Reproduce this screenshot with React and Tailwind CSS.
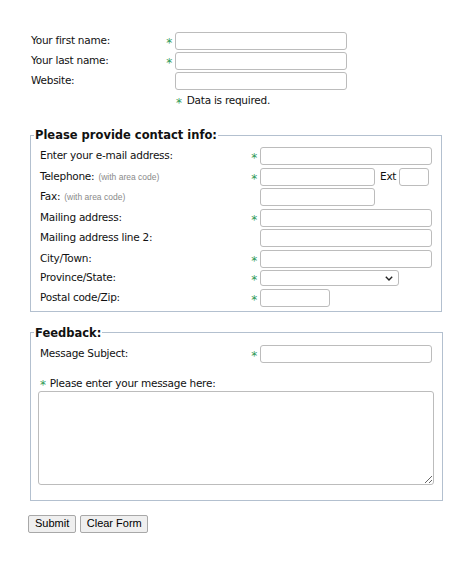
import React, { useState } from "react";

const Req = ({ className = "" }) => (
  <span className={"text-[#2f9a56] text-[12px] leading-none " + className}>*</span>
);

const inputCls =
  "h-[18px] border border-[#bcbcbc] rounded-[3px] bg-white px-1 text-[10px] outline-none";

const Row = ({ label, hint, required, children, h = "h-[18px]" }) => (
  <div className={"grid grid-cols-[208px_12px_1fr] items-center " + h}>
    <div className="whitespace-nowrap">
      {label}
      {hint && (
        <span className="ml-[4px] tracking-normal text-[8.5px] text-[#8a8a8a] font-['Liberation_Sans',sans-serif]">
          {hint}
        </span>
      )}
    </div>
    <div className="flex justify-center pt-[4px]">{required && <Req />}</div>
    <div className="flex items-center">{children}</div>
  </div>
);

const App = () => {
  const [form, setForm] = useState({
    firstName: "",
    lastName: "",
    website: "",
    email: "",
    phone: "",
    ext: "",
    fax: "",
    address: "",
    address2: "",
    city: "",
    province: "",
    postal: "",
    subject: "",
    message: "",
  });

  const onChange = (e) => {
    const { name, value } = e.target;
    setForm((f) => ({ ...f, [name]: value }));
  };

  const clear = () => {
    setForm((f) => Object.fromEntries(Object.keys(f).map((k) => [k, ""])));
  };

  return (
    <div className="bg-white min-h-[568px] font-['DejaVu_Sans',sans-serif] text-[10.5px] tracking-[-0.25px] text-[#111] pl-[28px] pt-[32px]">
      <form className="w-[416px]" onSubmit={(e) => e.preventDefault()}>
        {/* ---- name / website ---- */}
        <div className="flex flex-col gap-[2px]">
          {[
            ["Your first name:", "firstName", true],
            ["Your last name:", "lastName", true],
            ["Website:", "website", false],
          ].map(([label, name, req]) => (
            <div key={name} className="grid grid-cols-[135px_12px_172px] items-center h-[18px]">
              <div className="pl-[3px]">{label}</div>
              <div className="flex justify-center pt-[4px]">{req && <Req />}</div>
              <input name={name} value={form[name]} onChange={onChange} className={inputCls + " w-[172px]"} />
            </div>
          ))}
        </div>
        <div className="mt-[1px] pl-[148px] leading-[14px] flex items-center">
          <Req className="text-[11px] pt-[6px]" />
          <span className="ml-[5px]">Data is required.</span>
        </div>

        {/* ---- contact info ---- */}
        <fieldset className="mt-[19px] mx-[2px] border border-[#b3c0cf] pl-[3px] pr-[3px] pb-[4px]">
          <legend className="px-[1px] font-bold text-[11.5px] tracking-normal leading-[14px]">
            Please provide contact info:
          </legend>
          <div className="pl-[6px] pr-[5px] pt-[5px] flex flex-col gap-[2.5px]">
            <Row label="Enter your e-mail address:" required>
              <input name="email" value={form.email} onChange={onChange} className={inputCls + " w-[172px]"} />
            </Row>
            <Row label="Telephone:" hint="(with area code)" required>
              <input name="phone" value={form.phone} onChange={onChange} className={inputCls + " w-[115px]"} />
              <span className="ml-[5px] mr-[3px]">Ext</span>
              <input name="ext" value={form.ext} onChange={onChange} className={inputCls + " w-[30px]"} />
            </Row>
            <Row label="Fax:" hint="(with area code)">
              <input name="fax" value={form.fax} onChange={onChange} className={inputCls + " w-[115px]"} />
            </Row>
            <Row label="Mailing address:" required>
              <input name="address" value={form.address} onChange={onChange} className={inputCls + " w-[172px]"} />
            </Row>
            <Row label="Mailing address line 2:">
              <input name="address2" value={form.address2} onChange={onChange} className={inputCls + " w-[172px]"} />
            </Row>
            <Row label="City/Town:" required>
              <input name="city" value={form.city} onChange={onChange} className={inputCls + " w-[172px]"} />
            </Row>
            <Row label="Province/State:" required h="h-[16px]">
              <div className="relative w-[139px] h-[16px]">
                <select
                  name="province"
                  value={form.province}
                  onChange={onChange}
                  className="appearance-none w-full h-[16px] border border-[#bcbcbc] rounded-[3px] bg-white text-[10px] px-1 outline-none"
                >
                  <option value=""></option>
                  <option value="ON">Ontario</option>
                  <option value="QC">Quebec</option>
                  <option value="BC">British Columbia</option>
                </select>
                <svg
                  className="absolute right-[6px] top-[6px] pointer-events-none"
                  width="8"
                  height="5"
                  viewBox="0 0 8 5"
                >
                  <path d="M0.8 0.8 L4 4 L7.2 0.8" fill="none" stroke="#222" strokeWidth="1.4" />
                </svg>
              </div>
            </Row>
            <Row label="Postal code/Zip:" required>
              <input name="postal" value={form.postal} onChange={onChange} className={inputCls + " w-[70px]"} />
            </Row>
          </div>
        </fieldset>

        {/* ---- feedback ---- */}
        <fieldset className="mt-[14px] mx-[2px] border border-[#b3c0cf] pl-[3px] pr-[3px] pb-[15px]">
          <legend className="px-[1px] font-bold text-[11.5px] tracking-normal leading-[14px]">Feedback:</legend>
          <div className="pl-[6px] pr-[5px] pt-[5px]">
            <Row label="Message Subject:" required>
              <input name="subject" value={form.subject} onChange={onChange} className={inputCls + " w-[172px]"} />
            </Row>
            <div className="mt-[12px] leading-[14px] flex items-center">
              <Req className="pt-[4px]" />
              <span className="ml-[4px]">Please enter your message here:</span>
            </div>
            <textarea
              name="message"
              value={form.message}
              onChange={onChange}
              className="mt-[0px] -ml-[2px] block w-[396px] h-[94px] border border-[#bcbcbc] rounded-[3px] bg-white outline-none text-[10px] p-1"
            />
          </div>
        </fieldset>

        {/* ---- buttons ---- */}
        <div className="mt-[14px] flex gap-[4px] font-['Liberation_Sans',sans-serif] text-[11px] tracking-normal text-black">
          <button type="submit" className="h-[18px] px-[6px] border border-[#a8a8a8] rounded-[2px] bg-[#efefef] leading-none">
            Submit
          </button>
          <button type="button" onClick={clear} className="h-[18px] px-[5.5px] border border-[#a8a8a8] rounded-[2px] bg-[#efefef] leading-none">
            Clear Form
          </button>
        </div>
      </form>
    </div>
  );
};

export default App;
